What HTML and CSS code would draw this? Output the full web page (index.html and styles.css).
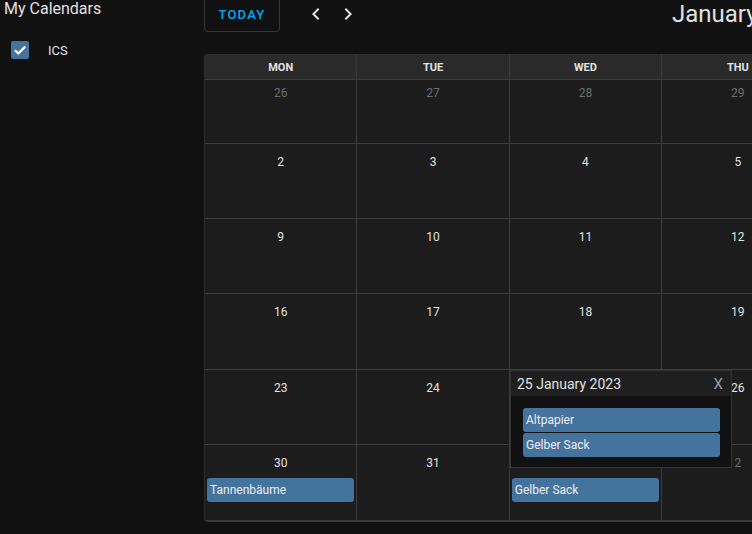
FILE: index.html
```html
<!DOCTYPE html>
<html lang="en">
<head>
<meta charset="utf-8">
<title>Calendar</title>
<link rel="stylesheet" href="styles.css">
</head>
<body>
<div class="page">
  <aside class="sidebar">
    <h2 class="sidebar-title">My Calendars</h2>
    <label class="cal-item">
      <span class="checkbox">
        <svg viewBox="0 0 18 18" width="18" height="18"><path d="M4 9.2l3.3 3.3L14.2 5.6" fill="none" stroke="#fff" stroke-width="2.2"/></svg>
      </span>
      <span class="cal-name">ICS</span>
    </label>
  </aside>
  <main class="main">
    <div class="toolbar">
      <button class="today-btn">TODAY</button>
      <div class="nav">
        <button class="icon-btn"><svg viewBox="0 0 24 24" width="24" height="24"><path d="M15.41,16.58L10.83,12L15.41,7.41L14,6L8,12L14,18L15.41,16.58Z" fill="#e1e1e1"/></svg></button>
        <button class="icon-btn"><svg viewBox="0 0 24 24" width="24" height="24"><path d="M8.59,16.58L13.17,12L8.59,7.41L10,6L16,12L10,18L8.59,16.58Z" fill="#e1e1e1"/></svg></button>
      </div>
      <div class="title">January 2023</div>
    </div>
    <div class="calendar">
      <div class="grid">
        <div class="dow">MON</div><div class="dow">TUE</div><div class="dow">WED</div><div class="dow">THU</div><div class="dow">FRI</div><div class="dow">SAT</div><div class="dow">SUN</div>

        <div class="cell first"><span class="num other">26</span></div>
        <div class="cell first"><span class="num other">27</span></div>
        <div class="cell first"><span class="num other">28</span></div>
        <div class="cell first"><span class="num other">29</span></div>
        <div class="cell first"><span class="num other">30</span></div>
        <div class="cell first"><span class="num other">31</span></div>
        <div class="cell first"><span class="num">1</span></div>

        <div class="cell"><span class="num">2</span></div>
        <div class="cell"><span class="num">3</span></div>
        <div class="cell"><span class="num">4</span></div>
        <div class="cell"><span class="num">5</span></div>
        <div class="cell"><span class="num">6</span></div>
        <div class="cell"><span class="num">7</span></div>
        <div class="cell"><span class="num">8</span></div>

        <div class="cell"><span class="num">9</span></div>
        <div class="cell"><span class="num">10</span></div>
        <div class="cell"><span class="num">11</span></div>
        <div class="cell"><span class="num">12</span></div>
        <div class="cell"><span class="num">13</span></div>
        <div class="cell"><span class="num">14</span></div>
        <div class="cell"><span class="num">15</span></div>

        <div class="cell"><span class="num">16</span></div>
        <div class="cell"><span class="num">17</span></div>
        <div class="cell"><span class="num">18</span></div>
        <div class="cell"><span class="num">19</span></div>
        <div class="cell"><span class="num">20</span></div>
        <div class="cell"><span class="num">21</span></div>
        <div class="cell"><span class="num">22</span></div>

        <div class="cell"><span class="num">23</span></div>
        <div class="cell"><span class="num">24</span></div>
        <div class="cell"><span class="num">25</span></div>
        <div class="cell"><span class="num">26</span></div>
        <div class="cell"><span class="num">27</span></div>
        <div class="cell"><span class="num">28</span></div>
        <div class="cell"><span class="num">29</span></div>

        <div class="cell last"><span class="num">30</span><div class="event">Tannenbäume</div></div>
        <div class="cell last"><span class="num">31</span></div>
        <div class="cell last"><span class="num other">1</span><div class="event">Gelber Sack</div></div>
        <div class="cell last"><span class="num other">2</span></div>
        <div class="cell last"><span class="num other">3</span></div>
        <div class="cell last"><span class="num other">4</span></div>
        <div class="cell last"><span class="num other">5</span></div>
      </div>
      <div class="popup">
        <div class="popup-head"><span>25 January 2023</span><span class="close">X</span></div>
        <div class="popup-body">
          <div class="event pop-event">Altpapier</div>
          <div class="event pop-event">Gelber Sack</div>
        </div>
      </div>
    </div>
  </main>
</div>
</body>
</html>
```
FILE: styles.css
```css
html, body {
  margin: 0;
  padding: 0;
  background: #111111;
  width: 752px;
  height: 534px;
  overflow: hidden;
  font-family: Roboto, "Noto Sans", sans-serif;
  color: #e1e1e1;
}

.page {
  display: flex;
  align-items: flex-start;
}

.sidebar {
  width: 204px;
  flex: none;
}

.sidebar-title {
  margin: 0;
  padding-left: 4px;
  font-size: 16px;
  font-weight: 400;
  line-height: 18px;
  color: #e1e1e1;
}

.cal-item {
  display: flex;
  align-items: center;
  margin-top: 23px;
  padding-left: 11px;
  height: 18px;
}

.checkbox {
  width: 18px;
  height: 18px;
  border-radius: 2px;
  background: #44739e;
  display: flex;
}

.cal-name {
  margin-left: 19px;
  font-size: 13px;
  color: #e1e1e1;
}

.main {
  flex: none;
  width: 1080px;
}

.toolbar {
  display: flex;
  align-items: flex-start;
  height: 54px;
}

.today-btn {
  margin-top: -5px;
  width: 76px;
  height: 37px;
  background: transparent;
  border: 1px solid #363636;
  border-radius: 4px;
  color: #03a9f4;
  font-family: Roboto, sans-serif;
  font-size: 13px;
  font-weight: 500;
  letter-spacing: 1.25px;
  padding: 0;
  padding-top: 1px;
}

.nav {
  display: flex;
  margin-left: 20px;
  margin-top: 2px;
}

.icon-btn {
  width: 32px;
  height: 24px;
  padding: 0 4px;
  background: transparent;
  border: 0;
  display: flex;
  justify-content: center;
}

.title {
  margin-left: 308px;
  font-size: 24px;
  line-height: 28px;
  color: #e1e1e1;
  white-space: nowrap;
}

.calendar {
  position: relative;
}

.grid {
  display: grid;
  grid-template-columns: repeat(7, 152.4px);
  grid-template-rows: 25px 64px repeat(5, 75.2px);
  border: 1px solid #2e2e2e;
  border-bottom: 2px solid #3a3a3a;
  border-radius: 4px;
  width: 1066.8px;
  background: #1c1c1c;
  box-sizing: content-box;
}

.dow {
  background: #2a2a2a;
  border-right: 1px solid #3c3c3c;
  border-bottom: 1px solid #3c3c3c;
  font-size: 11px;
  font-weight: 700;
  text-align: center;
  line-height: 24px;
  padding-top: 1px;
  box-sizing: border-box;
  color: #e1e1e1;
}

.cell {
  border-right: 1px solid #3c3c3c;
  border-bottom: 1px solid #3c3c3c;
  display: flex;
  flex-direction: column;
  align-items: center;
  padding-top: 10px;
  box-sizing: border-box;
}

.cell.first {
  padding-top: 5px;
}

.cell.last {
  border-bottom: 0;
}

.num {
  font-size: 12px;
  line-height: 16px;
  color: #e1e1e1;
}

.num.other {
  color: #6c6c6c;
}

.event {
  align-self: stretch;
  margin: 7px 2px 0 2px;
  height: 24px;
  line-height: 24px;
  background: #44739e;
  border-radius: 3px;
  padding-left: 3px;
  font-size: 12px;
  color: #eeeeee;
  white-space: nowrap;
  overflow: hidden;
}

.popup {
  position: absolute;
  left: 306px;
  top: 316px;
  width: 222px;
  border: 1px solid #333333;
  background: #111111;
  box-sizing: border-box;
}

.popup-head {
  display: flex;
  justify-content: space-between;
  align-items: center;
  height: 25px;
  background: #1f1f1f;
  padding: 0 8px 0 6px;
  font-size: 14px;
  color: #e1e1e1;
}

.close {
  color: #9a9a9a;
  font-size: 15px;
}

.popup-body {
  padding: 12px 11px 9px 12px;
}

.pop-event {
  margin: 0 0 1px 0;
}
```
